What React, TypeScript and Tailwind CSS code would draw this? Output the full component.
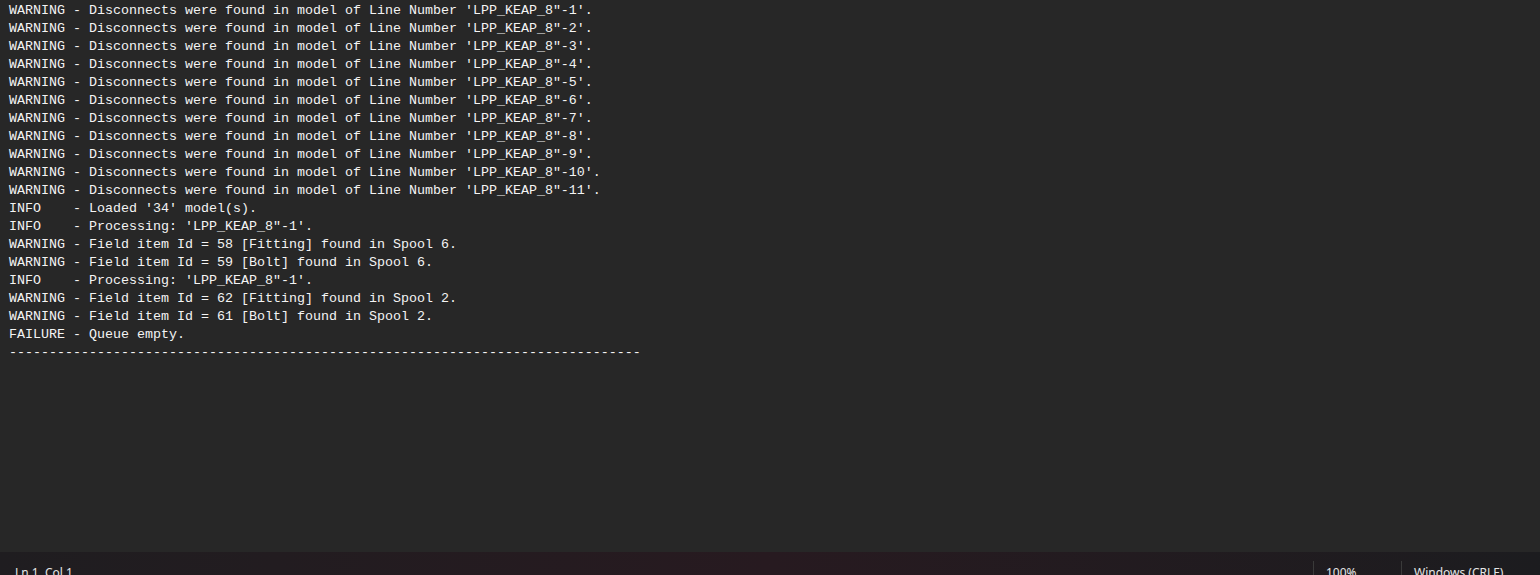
const lines: string[] = [
  ...Array.from({ length: 11 }, (_, i) =>
    `WARNING - Disconnects were found in model of Line Number 'LPP_KEAP_8"-${i + 1}'.`
  ),
  "INFO    - Loaded '34' model(s).",
  "INFO    - Processing: 'LPP_KEAP_8\"-1'.",
  "WARNING - Field item Id = 58 [Fitting] found in Spool 6.",
  "WARNING - Field item Id = 59 [Bolt] found in Spool 6.",
  "INFO    - Processing: 'LPP_KEAP_8\"-1'.",
  "WARNING - Field item Id = 62 [Fitting] found in Spool 2.",
  "WARNING - Field item Id = 61 [Bolt] found in Spool 2.",
  "FAILURE - Queue empty.",
  "-".repeat(79),
];

export default function App() {
  return (
    <div className="h-[575px] w-full overflow-hidden flex flex-col bg-[#272727]">
      <div className="h-[552px] shrink-0 pl-[9px] pt-[2px] text-[#f4f4f4] text-[13.333px] leading-[18px] whitespace-pre font-['Liberation_Mono',monospace]">
        {lines.map((l, i) => (
          <div key={i}>{l}</div>
        ))}
      </div>
      <div className="h-[34px] shrink-0 flex items-center text-[12px] text-[#e6e6e6] bg-gradient-to-r from-[#1f1d20] via-[#271a20] to-[#1c1c1f] font-['Noto_Sans',sans-serif]">
        <div className="flex-1 pl-[15px] pt-[8px]">Ln 1, Col 1</div>
        <div className="flex h-full items-center pt-[8px]">
          <div className="h-[24px] border-l border-[#3a3a3a] pl-[12px] w-[88px] flex items-center">100%</div>
          <div className="h-[24px] border-l border-[#3a3a3a] pl-[12px] w-[139px] flex items-center">Windows (CRLF)</div>
        </div>
      </div>
    </div>
  );
}
